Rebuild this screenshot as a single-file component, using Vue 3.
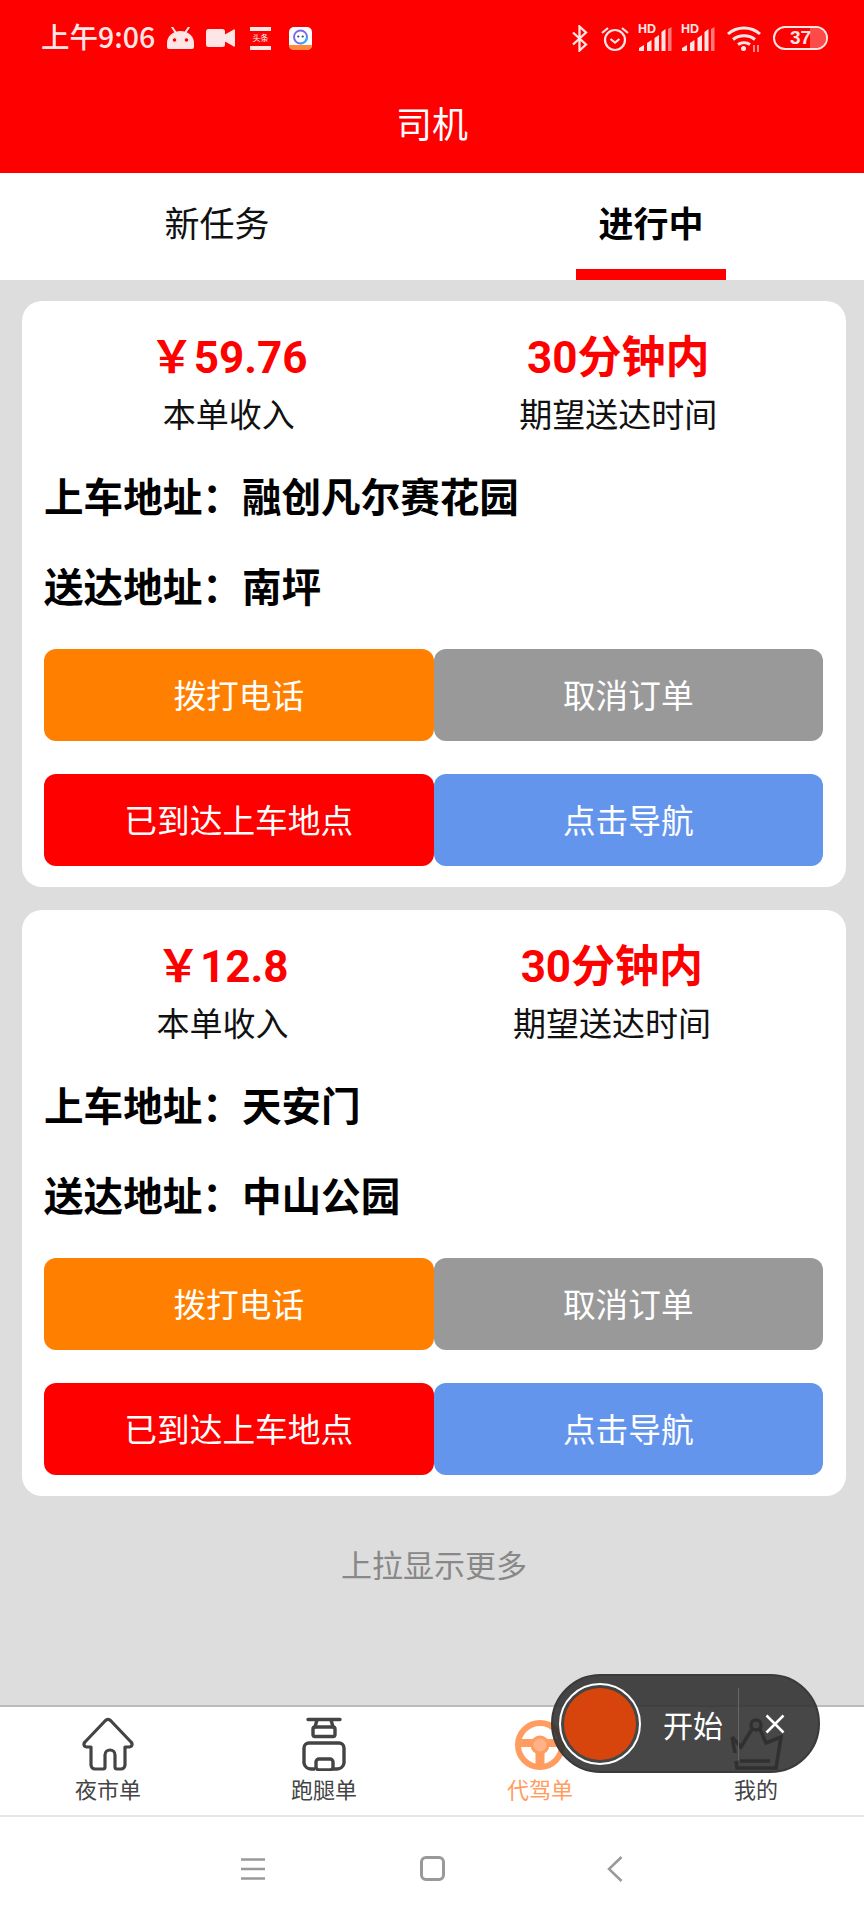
<template>
  <div class="page">
    <header class="top">
      <div class="status">
        <div class="status-left">
          <span class="time">上午9:06</span>
          <svg class="ic-android" viewBox="0 0 27 22"><path d="M0 20v-4C0 9 6 4 13.500 4S27 9 27 16v4a2 2 0 0 1-2 2H2a2 2 0 0 1-2-2z" fill="#ffe6e6"/><path d="M5 0l4 6M22 0l-4 6" stroke="#ffe6e6" stroke-width="2" stroke-linecap="round"/><circle cx="7.500" cy="13" r="1.800" fill="#f00"/><circle cx="19.500" cy="13" r="1.800" fill="#f00"/></svg>
          <svg class="ic-cam" viewBox="0 0 29 18"><rect width="19" height="18" rx="2.500" fill="#ffe6e6"/><path d="M18 6l9-5a1 1 0 0 1 2 1v14a1 1 0 0 1-2 1l-9-5z" fill="#ffe6e6"/></svg>
          <div class="ic-tt"><span>头条</span></div>
          <svg class="ic-app" viewBox="0 0 23 23"><rect width="23" height="23" rx="5" fill="#fff"/><path d="M0 18h23v0a5 5 0 0 1-5 5H5a5 5 0 0 1-5-5z" fill="#ff8a3c"/><circle cx="11.500" cy="10" r="6.500" fill="none" stroke="#7a6cf0" stroke-width="2"/><path d="M11.500 16.500a6.500 6.500 0 0 0 6.500-6.500" fill="none" stroke="#2fb8f0" stroke-width="2"/><circle cx="9.300" cy="9.500" r="1.100" fill="#3a3a6a"/><circle cx="13.700" cy="9.500" r="1.100" fill="#3a3a6a"/></svg>
        </div>
        <div class="status-right">
          <svg class="ic-bt" viewBox="0 0 18 27"><path d="M2 7.500l13 12-6.500 6V1.500l6.500 6-13 12" fill="none" stroke="#ffe6e6" stroke-width="2.300"/></svg>
          <svg class="ic-alarm" viewBox="0 0 28 27"><circle cx="14" cy="15" r="10" fill="none" stroke="#ffe6e6" stroke-width="2.200"/><path d="M9.500 14l4.500 3.500 4.500-3.500" fill="none" stroke="#ffe6e6" stroke-width="2.200"/><path d="M1 8l6-5M27 8l-6-5" stroke="#ffe6e6" stroke-width="2.200"/></svg>
          <div v-for="n in 2" :key="n" class="signal">
            <span class="hd">HD</span>
            <svg viewBox="0 0 34 25"><path d="M1 25v-3l5-3v6zM9 25v-8l4.500-3v11zM16.500 25V12l4.500-3v16zM23.500 25V6l4-3v22z" fill="#ffe6e6"/><path d="M30 25V3l3.500-2v24z" fill="#ff7a7a"/></svg>
          </div>
          <svg class="ic-wifi" viewBox="0 0 34 27"><path d="M1 9c9-8 23-8 32 0M6 14.500c6-5 16-5 22 0M11 19.500c3.500-2.500 8.500-2.500 12 0" fill="none" stroke="#ffe6e6" stroke-width="3"/><circle cx="16.500" cy="23.500" r="2.500" fill="#ffe6e6"/><path d="M27 20v7M31 20v7" stroke="#ffb3b3" stroke-width="1.500"/></svg>
          <div class="battery"><i></i><span>37</span></div>
        </div>
      </div>
      <div class="title">司机</div>
    </header>

    <nav class="tabs">
      <div class="tab">新任务</div>
      <div class="tab active">进行中</div>
    </nav>

    <main class="list">
      <section v-for="o in orders" :key="o.price" class="card">
        <div class="summary">
          <div class="col">
            <div class="big">{{ o.price }}</div>
            <div class="sub">本单收入</div>
          </div>
          <div class="col">
            <div class="big">30分钟内</div>
            <div class="sub">期望送达时间</div>
          </div>
        </div>
        <div class="addr first">上车地址：{{ o.from }}</div>
        <div class="addr">送达地址：{{ o.to }}</div>
        <div class="actions">
          <button class="btn orange">拨打电话</button>
          <button class="btn grey">取消订单</button>
          <button class="btn red">已到达上车地点</button>
          <button class="btn blue">点击导航</button>
        </div>
      </section>
      <div class="more">上拉显示更多</div>
    </main>

    <footer class="tabbar">
      <div class="bar-item">
        <svg viewBox="0 0 54 54" class="bar-icon"><path d="M14 52a4 4 0 0 1-4-4V30H6c-3 0-4-3-2-5L24 4c2-2 4-2 6 0l20 21c2 2 1 5-2 5h-4v18a4 4 0 0 1-4 4h-4a2 2 0 0 1-2-2V38a5 5 0 0 0-10 0v12a2 2 0 0 1-2 2z" fill="none" stroke="#444" stroke-width="3.200" stroke-linejoin="round"/></svg>
        <span>夜市单</span>
      </div>
      <div class="bar-item">
        <svg viewBox="0 0 54 54" class="bar-icon"><path d="M11 2.500h32M20 3l-2 7M34 3l2 7" fill="none" stroke="#444" stroke-width="3.400" stroke-linecap="round"/><rect x="16" y="10" width="22" height="9.500" rx="2" fill="none" stroke="#444" stroke-width="3.400"/><path d="M18 52h-4a7 7 0 0 1-7-6V31a5 5 0 0 1 5-5h30a5 5 0 0 1 5 5v15a7 7 0 0 1-7 6h-4" fill="none" stroke="#444" stroke-width="3.400"/><rect x="19" y="42" width="17" height="11" rx="3" fill="none" stroke="#444" stroke-width="3.400"/></svg>
        <span>跑腿单</span>
      </div>
      <div class="bar-item on">
        <svg viewBox="0 0 54 54" class="bar-icon"><circle cx="27" cy="28" r="22" fill="none" stroke="#ff9c5f" stroke-width="6"/><path d="M6 26h42" stroke="#ff9c5f" stroke-width="8"/><path d="M27 30v20" stroke="#ff9c5f" stroke-width="9"/><circle cx="27" cy="28" r="8" fill="#ffb287" stroke="#ff9c5f" stroke-width="3"/></svg>
        <span>代驾单</span>
      </div>
      <div class="bar-item">
        <svg viewBox="0 0 54 54" class="bar-icon"><path d="M3 20l9 10 11-18M31 12l6 14 15-6-5 31H8l-1-7M3 20l3 16M11 44h30" fill="none" stroke="#333" stroke-width="3.600"/><circle cx="27" cy="8" r="5" fill="none" stroke="#333" stroke-width="3.400"/></svg>
        <span>我的</span>
      </div>
    </footer>

    <div class="sysnav">
      <svg viewBox="0 0 24 22" class="nav-menu"><path d="M0 1.500h24M0 11h24M0 20.500h24" stroke="#999" stroke-width="2.500"/></svg>
      <div class="nav-home"></div>
      <svg viewBox="0 0 16 26" class="nav-back"><path d="M14.500 1L2 13l12.500 12" fill="none" stroke="#999" stroke-width="2.500"/></svg>
    </div>

    <div class="recorder">
      <div class="rec-dot"><i></i></div>
      <span class="rec-text">开始</span>
      <span class="rec-line"></span>
      <svg viewBox="0 0 20 20" class="rec-close"><path d="M1.500 1.500l17 17M18.500 1.500l-17 17" stroke="#fff" stroke-width="2.500"/></svg>
    </div>
  </div>
</template>

<script setup>
const orders = [
  { price: '￥59.76', from: '融创凡尔赛花园', to: '南坪' },
  { price: '￥12.8', from: '天安门', to: '中山公园' }
]
</script>

<style>
html, body { margin: 0; background: #ddd; }
</style>

<style scoped>
.page {
  position: relative;
  width: 864px;
  height: 1920px;
  overflow: hidden;
  display: flex;
  flex-direction: column;
  background: #ddd;
  font-family: "Noto Sans CJK SC", "Noto Sans", sans-serif;
}

.top { background: #f00; height: 173px; color: #fff; }
.status {
  height: 76px;
  display: flex;
  justify-content: space-between;
  align-items: center;
  padding: 0 36px 0 41px;
}
.status-left, .status-right { display: flex; align-items: center; }
.time { font-size: 28.500px; line-height: 36px; font-weight: 500; color: #ffe6e6; width: 126px; white-space: nowrap; margin-top: -4px; }
.ic-android { width: 27px; height: 22px; }
.ic-cam { width: 29px; height: 18px; margin-left: 12px; }
.ic-tt {
  width: 21px;
  height: 23px;
  margin-left: 15px;
  border-top: 4px solid #ffe6e6;
  border-bottom: 4px solid #ffe6e6;
  display: flex;
  align-items: center;
  justify-content: center;
  box-sizing: border-box;
}
.ic-tt span { font-size: 8px; line-height: 1; white-space: nowrap; color: #fff; }
.ic-app { width: 23px; height: 23px; margin-left: 18px; }
.ic-bt { width: 18px; height: 27px; }
.ic-alarm { width: 28px; height: 27px; margin-left: 12px; }
.signal { position: relative; width: 34px; height: 25px; margin-left: 9px; }
.signal svg { width: 34px; height: 25px; display: block; }
.hd { position: absolute; left: 0; top: -3px; font: 700 12.500px/13px "Liberation Sans", sans-serif; color: #ffe6e6; }
.ic-wifi { width: 34px; height: 27px; margin-left: 12px; }
.battery {
  position: relative;
  width: 55px;
  height: 24px;
  margin-left: 12px;
  box-sizing: border-box;
  border: 2px solid #ffe6e6;
  border-radius: 12px;
  overflow: hidden;
  text-align: center;
  font: 700 19px/20px "Liberation Sans", sans-serif;
  color: #ffe6e6;
}
.battery i { position: absolute; right: 0; top: 0; bottom: 0; width: 16px; background: #ff4a4a; }
.battery span { position: relative; }
.title { height: 93px; line-height: 93px; padding-bottom: 4px; text-align: center; font-size: 36px; }

/* the app is laid out 868 wide and clipped by the screen */
.tabs { display: flex; width: 868px; height: 107px; background: #fff; flex: none; }
.tab { flex: 1; text-align: center; line-height: 98px; font-size: 35px; color: #111; position: relative; }
.tab.active { font-weight: 700; color: #000; }
.tab.active::after {
  content: "";
  position: absolute;
  left: 142px;
  bottom: 0;
  width: 150px;
  height: 11px;
  background: #f00;
}

.list { flex: 1; width: 868px; box-sizing: border-box; padding: 21px 22px 0; display: flex; flex-direction: column; gap: 23px; }
.card {
  background: #fff;
  border-radius: 20px;
  padding: 27px 23px 21px 22px;
}
.summary { display: flex; justify-content: space-around; text-align: center; }
.big { font-family: Roboto, "Noto Sans CJK SC", sans-serif; font-size: 44px; line-height: 60px; font-weight: 700; color: #f00; white-space: nowrap; }
.sub { font-size: 33px; line-height: 51px; color: #111; }
.addr { font-size: 39.600px; line-height: 90px; font-weight: 700; color: #000; }
.addr.first { margin-top: 11px; }
.actions { display: grid; grid-template-columns: 1fr 1fr; row-gap: 33px; margin-top: 19px; }
.btn {
  border: none;
  height: 92px;
  border-radius: 12px;
  color: #fff;
  font-size: 32.700px;
  font-family: inherit;
  padding: 0 0 4px;
}
.orange { background: #ff8000; }
.grey { background: #999; }
.red { background: #f00; }
.blue { background: #6495ed; }
.more { text-align: center; font-size: 31px; line-height: 60px; color: #888; margin-top: 15px; }

.tabbar {
  height: 108px;
  flex: none;
  background: #fff;
  border-top: 2px solid #bbb;
  border-bottom: 2px solid #e6e6e6;
  display: grid;
  grid-template-columns: repeat(4, 1fr);
}
.bar-item { display: flex; flex-direction: column; align-items: center; font-size: 22px; color: #444; padding-top: 10px; }
.bar-item span { line-height: 30px; margin-top: 2px; }
.bar-item.on { color: #ff9c5f; }
.bar-icon { width: 54px; height: 54px; }

.sysnav { height: 103px; flex: none; background: #fff; display: flex; align-items: center; justify-content: center; }
.nav-menu { width: 24px; height: 22px; margin-right: 155px; }
.nav-home { width: 25px; height: 25px; box-sizing: border-box; border: 3px solid #999; border-radius: 6px; }
.nav-back { width: 16px; height: 26px; margin-left: 162px; }

.recorder {
  position: absolute;
  left: 551px;
  top: 1674px;
  width: 269px;
  height: 99px;
  box-sizing: border-box;
  border-radius: 50px;
  background: rgba(48, 48, 48, 0.89);
  border: 2px solid #3a3a3a;
  display: flex;
  align-items: center;
  color: #fff;
}
.rec-dot {
  width: 82px;
  height: 82px;
  margin-left: 6px;
  box-sizing: border-box;
  border: 2px solid #fff;
  border-radius: 50%;
  display: flex;
  align-items: center;
  justify-content: center;
}
.rec-dot i { width: 72px; height: 72px; border-radius: 50%; background: #d8450c; }
.rec-text { font-size: 30px; margin-left: 22px; line-height: 1; }
.rec-line { width: 1px; height: 72px; background: #666; margin-left: 15px; }
.rec-close { width: 20px; height: 20px; margin-left: 26px; }
</style>
